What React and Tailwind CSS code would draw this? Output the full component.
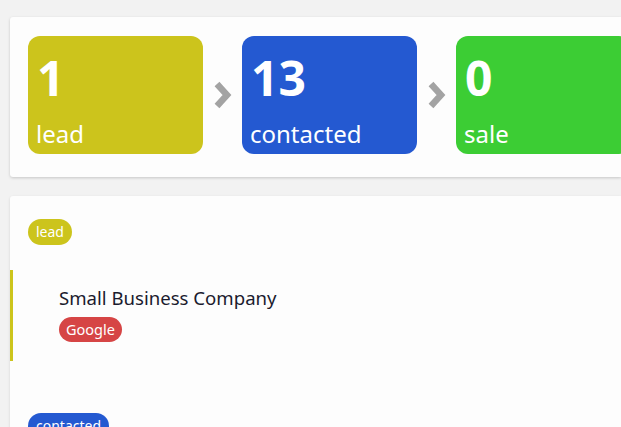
import React from "react";

const font = { fontFamily: '"Noto Sans", "Open Sans", sans-serif' };

function Stage({ n, label, color }) {
  return (
    <div className={`w-[175px] h-[118px] shrink-0 rounded-[12px] ${color} text-white pl-[9px] pt-[14px] flex flex-col`}>
      <div className="text-[48px] font-bold leading-[56px]">{n}</div>
      <div className="text-[24px] leading-[30px] mt-[13px] -ml-[1px]">{label}</div>
    </div>
  );
}

function Chevron() {
  return (
    <div className="w-[39px] h-[118px] shrink-0 flex items-center justify-center">
      <svg width="20" height="28" viewBox="0 0 20 28">
        <path d="M4 3 L14 14 L4 25" fill="none" stroke="#a3a3a3" strokeWidth="6.5" strokeLinejoin="miter" />
      </svg>
    </div>
  );
}

export default function App() {
  return (
    <div className="w-[621px] h-[427px] overflow-hidden bg-[#f2f2f2]" style={font}>
      <div className="pt-[17px] pl-[10px]">
        <div className="h-[160px] bg-[#fdfdfd] rounded-l-[3px] shadow-[0_1px_3px_rgba(0,0,0,0.18)] flex items-start pt-[19px] pl-[18px] overflow-hidden">
          <Stage n="1" label="lead" color="bg-[#ccc41c]" />
          <Chevron />
          <Stage n="13" label="contacted" color="bg-[#2459d1]" />
          <Chevron />
          <Stage n="0" label="sale" color="bg-[#3ccd34]" />
        </div>
        <div className="mt-[19px] h-[300px] bg-[#fdfdfd] rounded-tl-[3px] shadow-[0_1px_3px_rgba(0,0,0,0.12)] pt-[23px]">
          <div className="pl-[18px]">
            <span className="inline-block bg-[#ccc41c] text-white text-[14px] leading-[26px] px-[8px] rounded-full">lead</span>
          </div>
          <div className="mt-[25px] border-l-[3px] border-[#ccc41c] h-[91px] pl-[46px] pt-[15px]">
            <div className="text-[18.6px] leading-[26px] text-[#1b1b2e]">Small Business Company</div>
            <span className="inline-block mt-[6px] bg-[#d64545] text-white text-[14.5px] leading-[25px] px-[7px] rounded-full">Google</span>
          </div>
          <div className="pl-[18px] mt-[52px]">
            <span className="inline-block bg-[#2459d1] text-white text-[14px] leading-[26px] px-[8px] rounded-full">contacted</span>
          </div>
        </div>
      </div>
    </div>
  );
}
